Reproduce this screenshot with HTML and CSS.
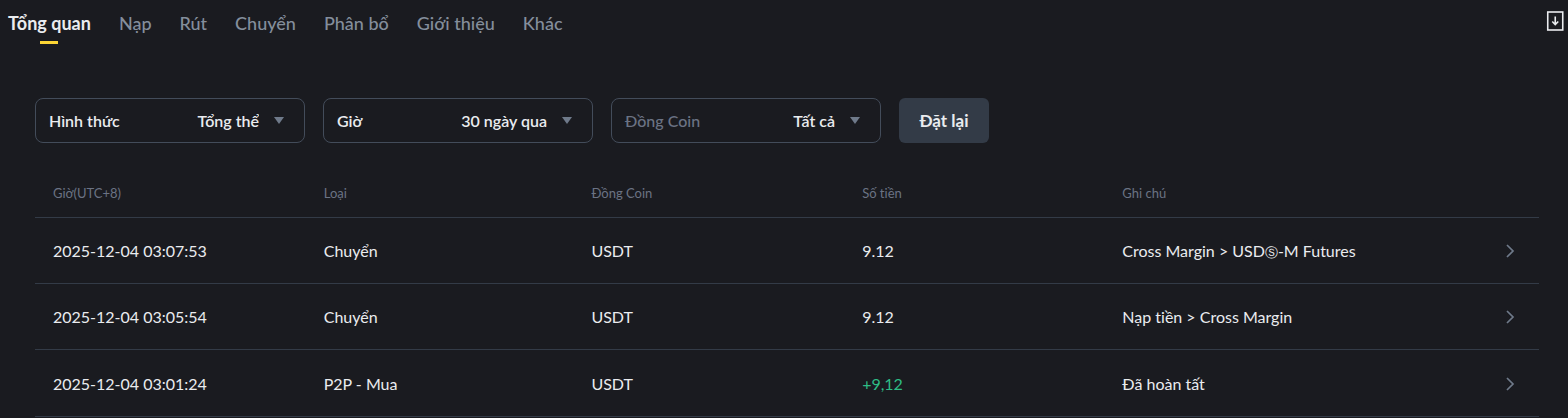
FILE: index.html
```
<!DOCTYPE html>
<html lang="vi">
<head>
  <meta charset="UTF-8">
  <meta name="viewport" content="width=device-width, initial-scale=1.0">
  <title>Lịch sử giao dịch</title>
  <link rel="stylesheet" href="styles.css">
</head>
<body>
  <header class="topbar">
    <nav class="tabs">
      <a class="tab active" href="#">Tổng quan</a>
      <a class="tab" href="#">Nạp</a>
      <a class="tab" href="#">Rút</a>
      <a class="tab" href="#">Chuyển</a>
      <a class="tab" href="#">Phân bổ</a>
      <a class="tab" href="#">Giới thiệu</a>
      <a class="tab" href="#">Khác</a>
    </nav>
    <button class="export" type="button" aria-label="Xuất">
      <svg width="18" height="20" viewBox="0 0 18 20" fill="none" stroke="currentColor">
        <rect x="1.75" y="1" width="15" height="18" stroke-width="1.6"/>
        <path d="M9.25 5.5v8M6.25 10.5l3 3 3-3" stroke-width="1.6"/>
      </svg>
    </button>
  </header>

  <main class="content">
    <form class="filters">
      <div class="filter">
        <label for="type">Hình thức</label>
        <select id="type"><option>Tổng thể</option></select>
        <svg class="caret" width="10" height="7" viewBox="0 0 10 7"><path d="M0 0h10L5 7z"/></svg>
      </div>
      <div class="filter">
        <label for="time">Giờ</label>
        <select id="time"><option>30 ngày qua</option></select>
        <svg class="caret" width="10" height="7" viewBox="0 0 10 7"><path d="M0 0h10L5 7z"/></svg>
      </div>
      <div class="filter">
        <label class="muted" for="coin">Đồng Coin</label>
        <select id="coin"><option>Tất cả</option></select>
        <svg class="caret" width="10" height="7" viewBox="0 0 10 7"><path d="M0 0h10L5 7z"/></svg>
      </div>
      <button class="reset" type="reset">Đặt lại</button>
    </form>

    <table class="history">
      <thead>
        <tr>
          <th class="col-time">Giờ(UTC+8)</th>
          <th class="col-type">Loại</th>
          <th class="col-coin">Đồng Coin</th>
          <th class="col-amount">Số tiền</th>
          <th>Ghi chú</th>
          <th class="col-more"></th>
        </tr>
      </thead>
      <tbody>
        <tr>
          <td>2025-12-04 03:07:53</td>
          <td>Chuyển</td>
          <td>USDT</td>
          <td>9.12</td>
          <td>Cross Margin &gt; USD<span class="circled">Ⓢ</span>-M Futures</td>
          <td class="more"><svg width="10" height="16" viewBox="0 0 10 16"><path d="M2 2l6 6-6 6"/></svg></td>
        </tr>
        <tr>
          <td>2025-12-04 03:05:54</td>
          <td>Chuyển</td>
          <td>USDT</td>
          <td>9.12</td>
          <td>Nạp tiền &gt; Cross Margin</td>
          <td class="more"><svg width="10" height="16" viewBox="0 0 10 16"><path d="M2 2l6 6-6 6"/></svg></td>
        </tr>
        <tr>
          <td>2025-12-04 03:01:24</td>
          <td>P2P - Mua</td>
          <td>USDT</td>
          <td class="plus">+9,12</td>
          <td>Đã hoàn tất</td>
          <td class="more"><svg width="10" height="16" viewBox="0 0 10 16"><path d="M2 2l6 6-6 6"/></svg></td>
        </tr>
      </tbody>
    </table>
  </main>
</body>
</html>
```
FILE: styles.css
```
* { box-sizing: border-box; }
body { margin: 0; background: #1a1b20; color: #eaecef; font-family: Lato, "Noto Sans", sans-serif; font-size: 16px; line-height: 24px; font-variant-ligatures: none; }
button, select { font: inherit; font-variant-ligatures: none; color: inherit; }

.topbar { display: flex; justify-content: space-between; align-items: flex-start; padding: 11px 4px 0 8px; }
.tabs { display: flex; gap: 28px; }
.tab { display: flex; flex-direction: column; align-items: center; color: #848e9c; font-size: 18px; font-weight: 500; text-decoration: none; }
.tab.active { color: #eaecef; font-weight: 700; }
.tab.active::after { content: ""; width: 18px; height: 3px; margin-top: 6px; background: #fcd535; }
.export { display: flex; padding: 0; border: 0; background: none; cursor: pointer; }

.content { padding: 54px 29px 0 35px; }
.filters { display: flex; flex-wrap: wrap; gap: 18px; }
.filter { display: flex; align-items: center; width: 270px; height: 45px; padding: 0 20px 0 13px; border: 1px solid #434c5a; border-radius: 8px; font-weight: 600; }
.filter label { white-space: nowrap; }
.filter .muted { color: #6b7384; font-weight: 500; }
.filter select { flex: 1; min-width: 0; margin-right: 15px; padding: 0; border: 0; background: none; appearance: none; text-align: right; text-align-last: right; }
.caret { fill: #6f7a8a; }
.reset { width: 90px; height: 45px; padding: 0; border: 0; border-radius: 6px; background: #333b47; font-size: 17px; font-weight: 700; }

.history { width: 100%; margin-top: 26px; border-collapse: collapse; table-layout: fixed; }
.history th, .history td { padding: 0 0 0 18px; border-bottom: 1px solid #333b47; text-align: left; white-space: nowrap; }
.history th { height: 48px; color: #6b7384; font-size: 13px; font-weight: 400; }
.history td { height: 66px; padding-top: 2px; }
.history tr:last-child td { height: 67px; }
.col-time { width: 18%; }
.col-type { width: 17.8%; }
.col-coin { width: 18%; }
.col-amount { width: 17.3%; }
.col-more { width: 52px; }
.more svg { display: block; fill: none; stroke: #6f7a8a; stroke-width: 1.7; }
.circled { font-size: 13px; }
.history .plus { color: #2ebd85; }
```
